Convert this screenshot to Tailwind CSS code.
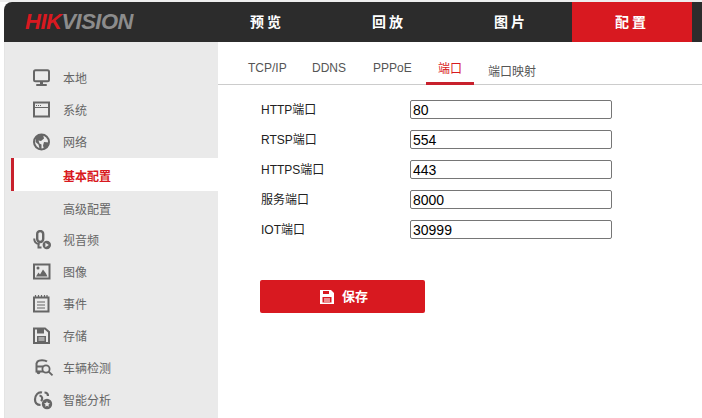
<!DOCTYPE html>
<html lang="zh">
<head>
    <meta charset="UTF-8">
    <title>配置</title>
    <script src="https://cdn.jsdelivr.net/npm/@tailwindcss/browser@4"></script>
</head>
<body class="bg-white w-[702px] h-[418px] overflow-hidden font-['Liberation_Sans','Noto_Sans_CJK_SC',sans-serif]">
    <div class="h-[2px] bg-[#eeeeee]"></div>
    <header class="ml-[4px] h-[40px] bg-[#2c2c2c] rounded-tl-[8px] flex">
        <div class="w-[202px] shrink-0 pl-[21px] flex items-center">
            <span class="text-[22px] font-bold italic tracking-[-0.5px] leading-none"><span class="text-[#d81920]">HIK</span><span class="text-[#8c8c8c]">VISION</span></span>
        </div>
        <nav class="flex text-white text-[14px] font-bold tracking-[3px]">
            <a class="w-[122px] flex items-center justify-center">预览</a>
            <a class="w-[122px] flex items-center justify-center">回放</a>
            <a class="w-[122px] flex items-center justify-center">图片</a>
            <a class="w-[120px] flex items-center justify-center bg-[#d81920]">配置</a>
        </nav>
    </header>
    <div class="flex h-[376px]">
        <aside class="ml-[4px] w-[214px] bg-[#eaeaea] pt-[20px] text-[12px] text-[#666666] border-l border-[#e4e4e4]">
            <a class="h-[32px] flex items-center">
                <svg class="ml-[28px] w-[18px] h-[18px]" viewBox="0 0 18 18"><rect x="1" y="1.2" width="15" height="11" rx="1.5" fill="none" stroke="#666" stroke-width="2"/><rect x="7" y="13" width="3" height="2.5" fill="#666"/><rect x="3" y="15" width="11" height="2" rx="1" fill="#666"/></svg>
                <span class="ml-[12px] pt-[2px]">本地</span>
            </a>
            <a class="h-[32px] flex items-center">
                <svg class="ml-[28px] w-[18px] h-[18px]" viewBox="0 0 18 18"><rect x="1" y="1.5" width="15" height="14" fill="none" stroke="#666" stroke-width="2"/><path d="M3 4.5h1M5 4.5h1M7 4.5h1M2 6.5h14" stroke="#666" stroke-width="1"/></svg>
                <span class="ml-[12px] pt-[2px]">系统</span>
            </a>
            <a class="h-[32px] flex items-center">
                <svg class="ml-[28px] w-[18px] h-[18px]" viewBox="0 0 18 18"><circle cx="8.5" cy="9" r="7.5" fill="none" stroke="#666" stroke-width="2"/><path d="M3 3l7-1.5 1 4-3 2.5-2.5-.5 1 3 2 1 0 5-2-1-1-4-3-2.5zM11 9l5 .5-1 4-4 3-1-4z" fill="#666"/></svg>
                <span class="ml-[12px] pt-[2px]">网络</span>
            </a>
            <a class="ml-[6px] h-[33px] flex items-center bg-white border-l-[3px] border-[#c8202c] text-[#d81920] font-bold">
                <span class="ml-[49px] pt-[4px]">基本配置</span>
            </a>
            <a class="h-[33px] flex items-center">
                <span class="ml-[58px] pt-[4px]">高级配置</span>
            </a>
            <a class="h-[32px] flex items-center">
                <svg class="ml-[27px] w-[20px] h-[20px]" viewBox="0 0 20 20"><rect x="5.2" y="1" width="6" height="11" rx="3" fill="none" stroke="#666" stroke-width="2.4"/><path d="M2.2 8.5c0 3.5 2 5.5 5.5 5.5M6.5 14v3.5h3" fill="none" stroke="#666" stroke-width="2"/><circle cx="14.8" cy="15" r="4.2" fill="#666"/><path d="M13.4 12.8l3.400 2.200-3.400 2.200z" fill="#eaeaea"/></svg>
                <span class="ml-[11px] pt-[2px]">视音频</span>
            </a>
            <a class="h-[32px] flex items-center">
                <svg class="ml-[28px] w-[18px] h-[18px]" viewBox="0 0 18 18"><rect x="1" y="1.5" width="15.5" height="14" fill="none" stroke="#666" stroke-width="2"/><path d="M3 13.5l2.500-4 1.500 2 3-5 3 4 1.500 3z" fill="#666"/><circle cx="5" cy="5" r="1.500" fill="#666"/></svg>
                <span class="ml-[12px] pt-[2px]">图像</span>
            </a>
            <a class="h-[32px] flex items-center">
                <svg class="ml-[28px] w-[18px] h-[18px]" viewBox="0 0 18 18"><rect x="1" y="2.5" width="14.5" height="14" fill="none" stroke="#666" stroke-width="2"/><path d="M2.5 0v3M5.500 0v3M8.500 0v3M11.500 0v3M14 0v3M4 7h8M4 10h8M4 13h8" stroke="#666" stroke-width="1.2"/></svg>
                <span class="ml-[12px] pt-[2px]">事件</span>
            </a>
            <a class="h-[32px] flex items-center">
                <svg class="ml-[28px] w-[18px] h-[18px]" viewBox="0 0 18 18"><path d="M1 1.5h11l4 3.500v11H1z" fill="none" stroke="#666" stroke-width="2"/><path d="M4 2h7v4.500H4zM4 9h9v6H4z" fill="#666"/><path d="M5.500 11h6M5.500 13h6" stroke="#eaeaea"/></svg>
                <span class="ml-[12px] pt-[2px]">存储</span>
            </a>
            <a class="h-[32px] flex items-center">
                <svg class="ml-[29px] w-[20px] h-[20px]" viewBox="0 0 20 20"><path d="M13 3.5C11 1.800 5 1.800 3.500 3.500L2.500 5.500v8h7M2.500 8.500h7" fill="none" stroke="#666" stroke-width="2"/><circle cx="4.5" cy="14.5" r="1.8" fill="#666"/><circle cx="12" cy="11" r="3.6" fill="#eaeaea" stroke="#666" stroke-width="1.8"/><path d="M14.5 13.5l4 3.800" stroke="#666" stroke-width="1.8"/></svg>
                <span class="ml-[9px] pt-[2px]">车辆检测</span>
            </a>
            <a class="h-[32px] flex items-center">
                <svg class="ml-[28px] w-[20px] h-[20px]" viewBox="0 0 20 20"><path d="M9 2.5C5 1.500 2 5.500 2 9.500c0 3.500 2 5.500 5.500 5.500M11.500 2.500c2.500 0 3.500 1.500 3.500 3.500M6.500 5.500c3 .5 3.500 3.500 1.500 5.500" fill="none" stroke="#666" stroke-width="2.2"/><circle cx="14" cy="14" r="5.2" fill="#666"/><path d="M14 11.2l.9 1.800 2 .3-1.450 1.400.35 2-1.800-.95-1.800.95.35-2-1.450-1.400 2-.3z" fill="#eaeaea"/></svg>
                <span class="ml-[10px] pt-[2px]">智能分析</span>
            </a>
        </aside>
        <main class="flex-1 pt-[16px]">
            <div class="h-[27px] border-b border-[#cccccc] flex text-[12px] text-[#555555] pl-[30px]">
                <a class="w-[64px] pt-[1px]">TCP/IP</a>
                <a class="w-[61px] pt-[1px]">DDNS</a>
                <a class="w-[53px] pt-[1px]">PPPoE</a>
                <a class="w-[48px] h-[27px] pt-[2px] text-center border-b-[3px] border-[#c8202c] text-[#d81920]">端口</a>
                <a class="ml-[14px] pt-[5px]">端口映射</a>
            </div>
            <form class="pl-[43px] pt-[15px] text-[12px] text-[#222222]">
                <div class="h-[30px] flex items-start">
                    <label class="w-[149px] h-[19px] flex items-center">HTTP端口</label>
                    <input class="w-[202px] h-[19px] border border-[#767676] rounded-[2px] pl-[2px] text-[14px] leading-none text-black" value="80">
                </div>
                <div class="h-[30px] flex items-start">
                    <label class="w-[149px] h-[19px] flex items-center">RTSP端口</label>
                    <input class="w-[202px] h-[19px] border border-[#767676] rounded-[2px] pl-[2px] text-[14px] leading-none text-black" value="554">
                </div>
                <div class="h-[30px] flex items-start">
                    <label class="w-[149px] h-[19px] flex items-center">HTTPS端口</label>
                    <input class="w-[202px] h-[19px] border border-[#767676] rounded-[2px] pl-[2px] text-[14px] leading-none text-black" value="443">
                </div>
                <div class="h-[30px] flex items-start">
                    <label class="w-[149px] h-[19px] flex items-center">服务端口</label>
                    <input class="w-[202px] h-[19px] border border-[#767676] rounded-[2px] pl-[2px] text-[14px] leading-none text-black" value="8000">
                </div>
                <div class="h-[30px] flex items-start">
                    <label class="w-[149px] h-[19px] flex items-center">IOT端口</label>
                    <input class="w-[202px] h-[19px] border border-[#767676] rounded-[2px] pl-[2px] text-[14px] leading-none text-black" value="30999">
                </div>
                <button type="button" class="-ml-[1px] mt-[30px] w-[165px] h-[33px] pl-[3px] bg-[#d81920] rounded-[2px] text-white text-[13px] font-bold flex items-center justify-center gap-[8px]">
                    <svg class="w-[14px] h-[14px]" viewBox="0 0 14 14"><path d="M0 0h11l3 3v11H0z" fill="#fff"/><path d="M3 1h6v3H3zM2.500 7h9v5.500h-9z" fill="#d81920"/><path d="M4 9h6M4 11h6" stroke="#fff"/></svg>
                    保存
                </button>
            </form>
        </main>
    </div>
</body>
</html>
